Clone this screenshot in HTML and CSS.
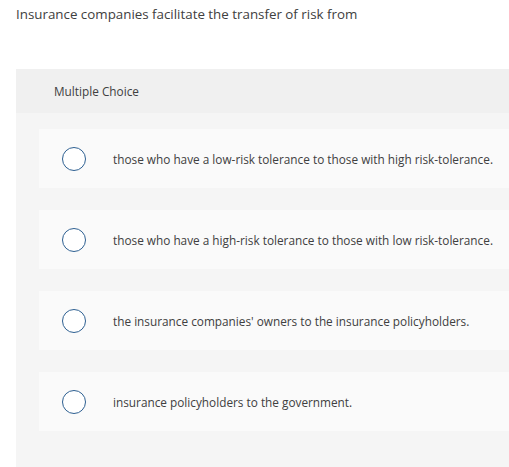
FILE: index.html
```html
<!DOCTYPE html>
<html>
<head>
<meta charset="utf-8">
<link rel="stylesheet" href="styles.css">
</head>
<body>
<p class="question">Insurance companies facilitate the transfer of risk from</p>
<section class="panel">
  <div class="panel-head">Multiple Choice</div>
  <div class="options">
    <div class="option"><span class="radio"></span><span class="label">those who have a low-risk tolerance to those with high risk-tolerance.</span></div>
    <div class="option"><span class="radio"></span><span class="label">those who have a high-risk tolerance to those with low risk-tolerance.</span></div>
    <div class="option"><span class="radio"></span><span class="label">the insurance companies' owners to the insurance policyholders.</span></div>
    <div class="option"><span class="radio"></span><span class="label">insurance policyholders to the government.</span></div>
  </div>
</section>
</body>
</html>
```
FILE: styles.css
```css
html, body {
  margin: 0;
  padding: 0;
  background: #ffffff;
  font-family: "Open Sans", "Liberation Sans", sans-serif;
  color: #404040;
}
.question {
  margin: 0;
  padding: 5px 0 0 16px;
  font-size: 13.35px;
  line-height: 18px;
  height: 69px;
  box-sizing: border-box;
}
.panel {
  margin-left: 16px;
  background: #f5f5f5;
  padding-bottom: 40px;
}
.panel-head {
  height: 44px;
  background: #f0f0f0;
  display: flex;
  align-items: center;
  padding-left: 38px;
  font-size: 11.8px;
}
.options {
  display: flex;
  flex-direction: column;
  gap: 22px;
  padding: 16px 0 0 23px;
}
.option {
  height: 59px;
  background: #fafafa;
  display: flex;
  align-items: center;
  padding-left: 23px;
}
.radio {
  width: 22px;
  height: 22px;
  border: 1.5px solid #2d5f91;
  border-radius: 50%;
  background: #fff;
  flex: none;
}
.label {
  margin-left: 27px;
  font-size: 11.8px;
}
```
